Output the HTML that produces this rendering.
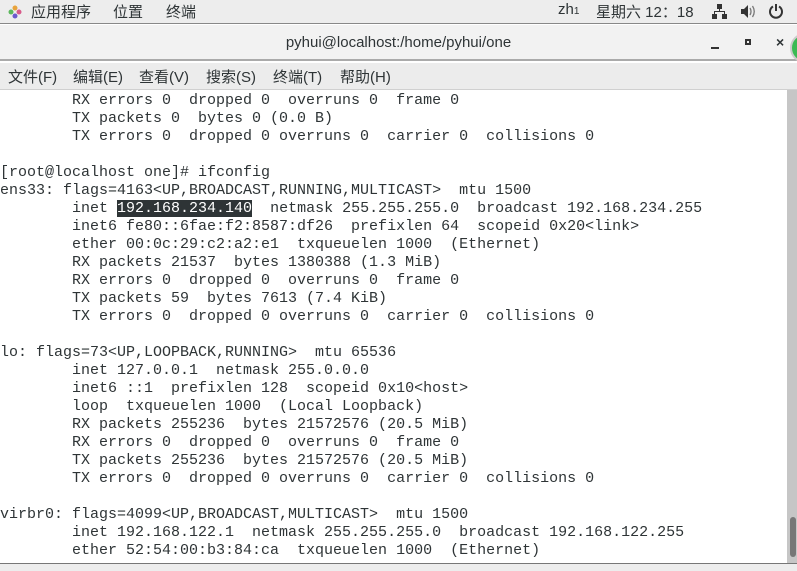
<!DOCTYPE html>
<html><head><meta charset="utf-8"><style>
*{margin:0;padding:0;box-sizing:border-box}
body{width:797px;height:571px;overflow:hidden;background:#fff;position:relative;font-family:"Liberation Sans","Noto Sans CJK SC",sans-serif;color:#2e3436}
#top{position:absolute;left:0;top:0;width:797px;height:24px;background:#ededed;border-bottom:1px solid #888;font-size:15px}
#top span{position:absolute;top:1px}
#title{position:absolute;left:0;top:25px;width:797px;height:36px;background:#f2f2f2;border-bottom:2px solid #aaa;font-size:15px}
#menu{position:absolute;left:0;top:63px;width:797px;height:27px;background:#ececec;border-bottom:1px solid #d0d0d0;font-size:15px}
#menu span{position:absolute;top:3px}
#term{position:absolute;left:0;top:92px;width:787px;height:471px;overflow:hidden}
pre{font-family:"Liberation Mono",monospace;font-size:15px;line-height:18px;color:#2e3436}
.sel{background:#2e3436;color:#fff}
#sb{position:absolute;left:787px;top:90px;width:10px;height:473px;background:#c6c6c6}
#thumb{position:absolute;left:790px;top:517px;width:6px;height:40px;background:#777;border-radius:3px}
#bot{position:absolute;left:0;top:563px;width:797px;height:8px;background:#ededed;border-top:1px solid #777}
</style></head><body>
<div id="top">
<svg style="position:absolute;left:8px;top:5px" width="14" height="14" viewBox="0 0 14 14"><circle cx="7" cy="3" r="2.5" fill="#e8a33c"/><circle cx="11" cy="7" r="2.5" fill="#d85a8a"/><circle cx="7" cy="11" r="2.5" fill="#6a5acd"/><circle cx="3" cy="7" r="2.5" fill="#5cb85c"/></svg>
<span style="left:31px">应用程序</span><span style="left:113px">位置</span><span style="left:166px">终端</span>
<span style="left:558px">zh<small style="font-size:10px">1</small></span><span style="left:596px">星期六 12：18</span>
<svg style="position:absolute;left:712px;top:4px" width="15" height="15" viewBox="0 0 15 15" fill="#333"><rect x="5" y="0" width="5" height="5"/><rect x="7" y="5" width="1" height="3"/><rect x="2" y="7" width="11" height="1"/><rect x="2" y="7" width="1" height="3"/><rect x="12" y="7" width="1" height="3"/><rect x="0" y="10" width="5" height="5"/><rect x="10" y="10" width="5" height="5"/></svg>
<svg style="position:absolute;left:740px;top:4px" width="16" height="15" viewBox="0 0 16 15"><path d="M1 5h3l4-4v13l-4-4H1z" fill="#333"/><path d="M10 4q2 3.5 0 7M12.5 2q3.5 5.5 0 11" stroke="#777" stroke-width="1.3" fill="none"/></svg>
<svg style="position:absolute;left:768px;top:3px" width="16" height="16" viewBox="0 0 16 16"><path d="M5 3.5A6 6 0 1 0 11 3.5" stroke="#333" stroke-width="2" fill="none"/><rect x="7" y="1" width="2" height="7" fill="#333"/></svg>
</div>
<div id="title"><div style="position:absolute;left:0;width:797px;text-align:center;top:9px">pyhui@localhost:/home/pyhui/one</div>
<div style="position:absolute;left:711px;top:22px;width:8px;height:2px;background:#333"></div>
<div style="position:absolute;left:745px;top:14px;width:6px;height:6px;border:2px solid #333"></div>
<div style="position:absolute;left:776px;top:9px;font-size:14px;font-weight:bold">×</div>
<div style="position:absolute;left:790px;top:8px;width:30px;height:30px;border-radius:50%;background:#3cba54;border:2px solid #ccc"></div>
</div>
<div id="menu"><span style="left:8px">文件(F)</span><span style="left:73px">编辑(E)</span><span style="left:139px">查看(V)</span><span style="left:206px">搜索(S)</span><span style="left:273px">终端(T)</span><span style="left:340px">帮助(H)</span></div>
<div id="term"><pre>        RX errors 0  dropped 0  overruns 0  frame 0
        TX packets 0  bytes 0 (0.0 B)
        TX errors 0  dropped 0 overruns 0  carrier 0  collisions 0

[root@localhost one]# ifconfig
ens33: flags=4163&lt;UP,BROADCAST,RUNNING,MULTICAST&gt;  mtu 1500
        inet <span class="sel">192.168.234.140</span>  netmask 255.255.255.0  broadcast 192.168.234.255
        inet6 fe80::6fae:f2:8587:df26  prefixlen 64  scopeid 0x20&lt;link&gt;
        ether 00:0c:29:c2:a2:e1  txqueuelen 1000  (Ethernet)
        RX packets 21537  bytes 1380388 (1.3 MiB)
        RX errors 0  dropped 0  overruns 0  frame 0
        TX packets 59  bytes 7613 (7.4 KiB)
        TX errors 0  dropped 0 overruns 0  carrier 0  collisions 0

lo: flags=73&lt;UP,LOOPBACK,RUNNING&gt;  mtu 65536
        inet 127.0.0.1  netmask 255.0.0.0
        inet6 ::1  prefixlen 128  scopeid 0x10&lt;host&gt;
        loop  txqueuelen 1000  (Local Loopback)
        RX packets 255236  bytes 21572576 (20.5 MiB)
        RX errors 0  dropped 0  overruns 0  frame 0
        TX packets 255236  bytes 21572576 (20.5 MiB)
        TX errors 0  dropped 0 overruns 0  carrier 0  collisions 0

virbr0: flags=4099&lt;UP,BROADCAST,MULTICAST&gt;  mtu 1500
        inet 192.168.122.1  netmask 255.255.255.0  broadcast 192.168.122.255
        ether 52:54:00:b3:84:ca  txqueuelen 1000  (Ethernet)</pre></div>
<div id="sb"></div><div id="thumb"></div>
<div id="bot"></div>
</body></html>
